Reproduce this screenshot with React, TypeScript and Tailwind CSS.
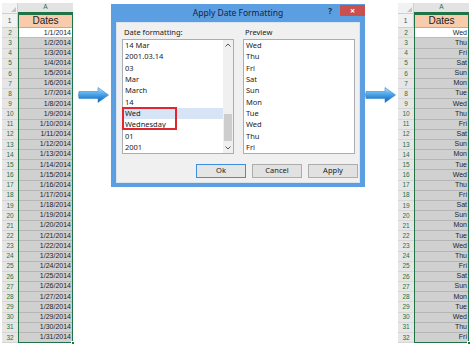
import React from "react";

const dates = Array.from({ length: 31 }, (_, i) => `1/${i + 1}/2014`);
const weekdays = ["Wed", "Thu", "Fri", "Sat", "Sun", "Mon", "Tue"];
const dayNames = dates.map((_, i) => weekdays[i % 7]);

const formats = ["14 Mar", "2001.03.14", "03", "Mar", "March", "14", "Wed", "Wednesday", "01", "2001"];
const preview = ["Wed", "Thu", "Fri", "Sat", "Sun", "Mon", "Tue", "Wed", "Thu", "Fri"];

function Sheet({ values }: { values: string[] }) {
  return (
    <div className="mt-[3px] w-[71px] shrink-0 font-['Liberation_Sans',Arial,sans-serif] text-[#1f1f1f]">
      <div className="flex h-[11px]">
        <div className="relative w-[16px] border-r border-b border-[#d0d0d0] bg-[#f2f2f2]">
          <svg className="absolute right-[1px] bottom-[1px]" width="5" height="5" viewBox="0 0 5 5">
            <path d="M5 0 V5 H0 Z" fill="#c4c4c4" />
          </svg>
        </div>
        <div className="flex flex-1 items-center justify-center border-b-2 border-[#217346] bg-[#e3e3e3] text-[6.5px] leading-none text-[#217346]">
          A
        </div>
      </div>
      <div className="flex">
        <div className="w-[16px]">
          <div className="flex h-[14.2px] items-center justify-center border-r border-b border-[#d0d0d0] bg-[#f2f2f2] text-[6.5px] text-[#444]">
            1
          </div>
          {values.map((_, i) => (
            <div
              key={i}
              className="flex h-[10.17px] items-center justify-center border-b border-[#d6d6d6] bg-[#e6e6e6] text-[6.5px] text-[#217346]"
            >
              {i + 2}
            </div>
          ))}
        </div>
        <div className="relative flex-1 outline-[1.5px] outline-solid outline-[#217346] -outline-offset-1">
          <div className="flex h-[14.2px] items-center justify-center border-b border-[#b0b0b0] bg-[#f8cbad] text-[10px] text-[#222]">
            Dates
          </div>
          {values.map((v, i) => (
            <div
              key={i}
              className={
                i === 0
                  ? "flex h-[10.17px] items-center justify-end border-b border-[#bdbdbd] bg-white pr-[2px] text-[7px]"
                  : "flex h-[10.17px] items-center justify-end border-b border-[#b5b5b5] bg-[#d0d0d0] pr-[2px] text-[7px]"
              }
            >
              {v}
            </div>
          ))}
          <div className="absolute -right-[2px] -bottom-[2px] h-[4px] w-[4px] border border-white bg-[#217346]" />
        </div>
      </div>
    </div>
  );
}

function Arrow({ className }: { className: string }) {
  return (
    <svg className={className} width="31" height="16" viewBox="0 0 31 16">
      <defs>
        <linearGradient id="arrowFill" x1="0" y1="0" x2="0" y2="1">
          <stop offset="0" stopColor="#c6e6fb" />
          <stop offset="0.35" stopColor="#5fb2ee" />
          <stop offset="0.7" stopColor="#2a86d8" />
          <stop offset="1" stopColor="#1b5ea8" />
        </linearGradient>
      </defs>
      <path d="M1 4.5 H20 V0.5 L30.5 8 L20 15.5 V11.5 H1 Q0 8 1 4.5 Z" fill="url(#arrowFill)" stroke="#3b83c9" strokeWidth="0.6" />
    </svg>
  );
}

function Chevron({ up }: { up?: boolean }) {
  return (
    <svg width="6" height="4" viewBox="0 0 6 4">
      <path d={up ? "M0.5 3.5 L3 1 L5.5 3.5" : "M0.5 0.5 L3 3 L5.5 0.5"} fill="none" stroke="#555" strokeWidth="1" />
    </svg>
  );
}

function ListBox({ items, scroll }: { items: string[]; scroll?: boolean }) {
  return (
    <div className="relative flex h-[115px] w-[112px] border border-[#abadb3] bg-white">
      <div className="flex-1">
        {items.map((t, i) => (
          <div
            key={i}
            className={
              scroll && i === 6
                ? "h-[11.33px] bg-[#d7e4f5] pl-[2px] text-[7.5px] leading-[11.33px] text-[#1a1a1a]"
                : "h-[11.33px] pl-[2px] text-[7.5px] leading-[11.33px] text-[#1a1a1a]"
            }
          >
            {t}
          </div>
        ))}
      </div>
      {scroll && (
        <div className="relative flex w-[10px] flex-col items-center justify-between bg-[#f0f0f0] py-[3px]">
          <Chevron up />
          <Chevron />
          <div className="absolute top-[74px] left-[1px] h-[27px] w-[8px] bg-[#cdcdcd]" />
        </div>
      )}
      {scroll && <div className="absolute top-[67px] -left-[1px] h-[23px] w-[55px] border-2 border-[#e0262e]" />}
    </div>
  );
}

function DialogButton({ label, primary }: { label: string; primary?: boolean }) {
  return (
    <div
      className={
        primary
          ? "flex h-[14px] w-[50px] items-center justify-center border border-[#3c8ee0] bg-[#e5e5e5] text-[7.5px] text-[#1a1a1a]"
          : "flex h-[14px] w-[50px] items-center justify-center border border-[#adadad] bg-[#e1e1e1] text-[7.5px] text-[#1a1a1a]"
      }
    >
      {label}
    </div>
  );
}

function Dialog() {
  return (
    <div className="mt-[4px] ml-[2px] flex h-[183px] w-[254px] shrink-0 flex-col bg-[#5c9ee2] px-[5px] pb-[4px] font-['Noto_Sans','Open_Sans',sans-serif]">
      <div className="relative flex h-[18px] items-center justify-center pt-[1px] text-[8.5px] text-[#16243a]">
        Apply Date Formatting
        <div className="absolute top-[1px] -right-[5px] flex items-start">
          <span className="mr-[8px] text-[8px] font-bold leading-[11px] text-[#1d2d44]">?</span>
          <div className="flex h-[11px] w-[25px] items-center justify-center bg-[#c9504f] text-[9px] leading-none font-bold text-white">
            ×
          </div>
        </div>
      </div>
      <div className="flex flex-1 flex-col border border-[#d9e4ef] bg-[#f0f0f0] pt-[3px] pl-[5px]">
        <div className="flex gap-[9px]">
          <div>
            <div className="h-[13px] pl-[2px] text-[7.5px] leading-[13px] text-[#1a1a1a]">Date formatting:</div>
            <ListBox items={formats} scroll />
          </div>
          <div>
            <div className="h-[13px] pl-[2px] text-[7.5px] leading-[13px] text-[#1a1a1a]">Preview</div>
            <ListBox items={preview} />
          </div>
        </div>
        <div className="mt-[10px] flex justify-end gap-[6px] pr-[1px]">
          <DialogButton label="Ok" primary />
          <DialogButton label="Cancel" />
          <DialogButton label="Apply" />
        </div>
      </div>
    </div>
  );
}

export default function App() {
  return (
    <div className="flex h-[348px] w-[474px] items-start overflow-hidden bg-white pl-[2px]">
      <Sheet values={dates} />
      <Arrow className="mt-[87px] ml-[5px] shrink-0" />
      <Dialog />
      <Arrow className="mt-[87px] shrink-0" />
      <div className="ml-[2px]">
        <Sheet values={dayNames} />
      </div>
    </div>
  );
}
